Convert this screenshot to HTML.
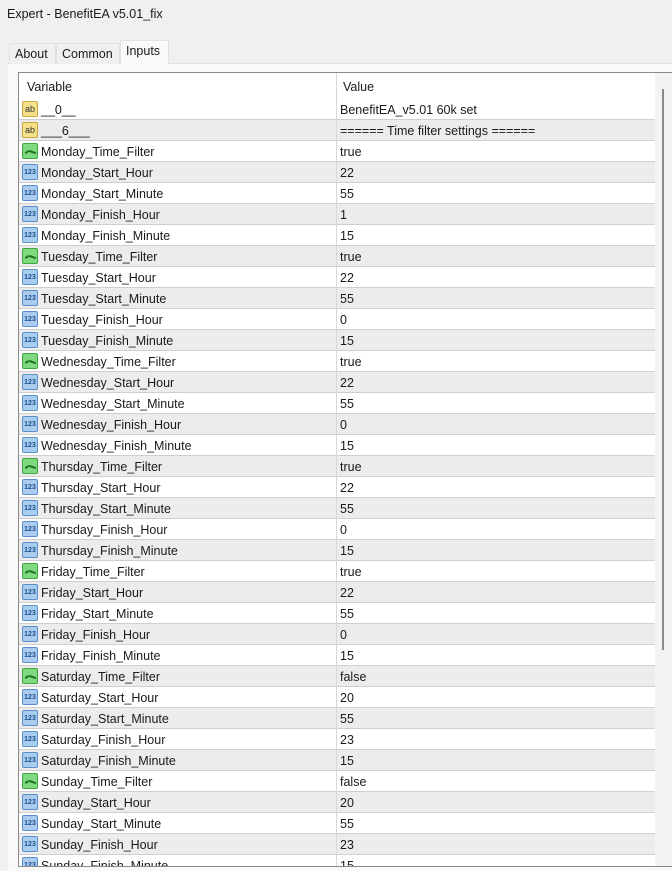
<!DOCTYPE html>
<html><head><meta charset="utf-8"><style>
*{margin:0;padding:0;box-sizing:border-box}
body{width:672px;height:871px;overflow:hidden;background:#f0f0f0;font-family:"Liberation Sans",sans-serif;font-size:12.5px;color:#1a1a1a;position:relative}
.title{position:absolute;left:7px;top:7px;font-size:12.5px}
.tab{position:absolute;top:43px;height:21px;border:1px solid #e2e2e2;border-bottom:none;background:#f0f0f0;padding:3px 0 0 5px}
.panel{position:absolute;left:8px;top:63px;width:664px;height:808px;background:#f9f9f9;border-top:1px solid #e0e0e0}
.tbl{position:absolute;left:18px;top:72px;width:654px;height:795px;border:1px solid #8a8a8a;border-right:none;background:#fff;overflow:hidden}
.hdr{position:absolute;left:0;top:0;width:636px;height:25px;background:#fff}
.hdr span{position:absolute;top:7px}
.vline{position:absolute;left:317px;top:0;width:1px;height:800px;background:#d8d8d8}
.row{position:absolute;left:0;width:636px;height:21px;border-bottom:1px solid #cfcfcf}
.row.g{background:#ececec}
.row .n{position:absolute;left:22px;top:4px}
.row .v{position:absolute;left:321px;top:4px}
.ic{position:absolute;left:3px;top:2px;width:16px;height:16px;border-radius:2px;font-size:8px;text-align:center;line-height:15px;font-style:normal;display:block}
.ab{background:#f4e08a;border:1px solid #c9a93e;color:#333;font-size:9px}
.gr{background:#7fd97f;border:1px solid #3fa63f}
.bl{background:#a9ccef;border:1px solid #5b8fc8;color:#1b4f8e;font-weight:bold;font-size:7px}
.sb{position:absolute;left:636px;top:0;width:18px;height:800px;background:#f3f3f3}
.th{position:absolute;left:7px;top:16px;width:2px;height:561px;background:#8a8a8a}
i.gr::before{content:"";position:absolute;left:2px;top:7px;width:4px;height:2px;background:#1f6e1f;transform:rotate(-35deg)}
i.gr::after{content:"";position:absolute;left:6px;top:7px;width:7px;height:2px;background:#1f6e1f;transform:rotate(20deg)}
</style></head><body>
<div class="title">Expert - BenefitEA v5.01_fix</div>
<div class="panel"></div>
<div class="tab" style="left:9px;width:47px">About</div>
<div class="tab" style="left:56px;width:64px">Common</div>
<div class="tab" style="left:120px;top:40px;height:24px;width:49px;background:#f9f9f9;padding-top:3px">Inputs</div>
<div class="tbl">
<div class="hdr"><span style="left:8px">Variable</span><span style="left:324px">Value</span></div>
<div style="position:absolute;top:26px;left:0;width:654px;height:800px">
<div class="row" style="top:0"><i class="ic ab">ab</i><span class="n">__0__</span><span class="v">BenefitEA_v5.01 60k set</span></div>
<div class="row g" style="top:21px"><i class="ic ab">ab</i><span class="n">___6___</span><span class="v">====== Time filter settings ======</span></div>
<div class="row" style="top:42px"><i class="ic gr"></i><span class="n">Monday_Time_Filter</span><span class="v">true</span></div>
<div class="row g" style="top:63px"><i class="ic bl">123</i><span class="n">Monday_Start_Hour</span><span class="v">22</span></div>
<div class="row" style="top:84px"><i class="ic bl">123</i><span class="n">Monday_Start_Minute</span><span class="v">55</span></div>
<div class="row g" style="top:105px"><i class="ic bl">123</i><span class="n">Monday_Finish_Hour</span><span class="v">1</span></div>
<div class="row" style="top:126px"><i class="ic bl">123</i><span class="n">Monday_Finish_Minute</span><span class="v">15</span></div>
<div class="row g" style="top:147px"><i class="ic gr"></i><span class="n">Tuesday_Time_Filter</span><span class="v">true</span></div>
<div class="row" style="top:168px"><i class="ic bl">123</i><span class="n">Tuesday_Start_Hour</span><span class="v">22</span></div>
<div class="row g" style="top:189px"><i class="ic bl">123</i><span class="n">Tuesday_Start_Minute</span><span class="v">55</span></div>
<div class="row" style="top:210px"><i class="ic bl">123</i><span class="n">Tuesday_Finish_Hour</span><span class="v">0</span></div>
<div class="row g" style="top:231px"><i class="ic bl">123</i><span class="n">Tuesday_Finish_Minute</span><span class="v">15</span></div>
<div class="row" style="top:252px"><i class="ic gr"></i><span class="n">Wednesday_Time_Filter</span><span class="v">true</span></div>
<div class="row g" style="top:273px"><i class="ic bl">123</i><span class="n">Wednesday_Start_Hour</span><span class="v">22</span></div>
<div class="row" style="top:294px"><i class="ic bl">123</i><span class="n">Wednesday_Start_Minute</span><span class="v">55</span></div>
<div class="row g" style="top:315px"><i class="ic bl">123</i><span class="n">Wednesday_Finish_Hour</span><span class="v">0</span></div>
<div class="row" style="top:336px"><i class="ic bl">123</i><span class="n">Wednesday_Finish_Minute</span><span class="v">15</span></div>
<div class="row g" style="top:357px"><i class="ic gr"></i><span class="n">Thursday_Time_Filter</span><span class="v">true</span></div>
<div class="row" style="top:378px"><i class="ic bl">123</i><span class="n">Thursday_Start_Hour</span><span class="v">22</span></div>
<div class="row g" style="top:399px"><i class="ic bl">123</i><span class="n">Thursday_Start_Minute</span><span class="v">55</span></div>
<div class="row" style="top:420px"><i class="ic bl">123</i><span class="n">Thursday_Finish_Hour</span><span class="v">0</span></div>
<div class="row g" style="top:441px"><i class="ic bl">123</i><span class="n">Thursday_Finish_Minute</span><span class="v">15</span></div>
<div class="row" style="top:462px"><i class="ic gr"></i><span class="n">Friday_Time_Filter</span><span class="v">true</span></div>
<div class="row g" style="top:483px"><i class="ic bl">123</i><span class="n">Friday_Start_Hour</span><span class="v">22</span></div>
<div class="row" style="top:504px"><i class="ic bl">123</i><span class="n">Friday_Start_Minute</span><span class="v">55</span></div>
<div class="row g" style="top:525px"><i class="ic bl">123</i><span class="n">Friday_Finish_Hour</span><span class="v">0</span></div>
<div class="row" style="top:546px"><i class="ic bl">123</i><span class="n">Friday_Finish_Minute</span><span class="v">15</span></div>
<div class="row g" style="top:567px"><i class="ic gr"></i><span class="n">Saturday_Time_Filter</span><span class="v">false</span></div>
<div class="row" style="top:588px"><i class="ic bl">123</i><span class="n">Saturday_Start_Hour</span><span class="v">20</span></div>
<div class="row g" style="top:609px"><i class="ic bl">123</i><span class="n">Saturday_Start_Minute</span><span class="v">55</span></div>
<div class="row" style="top:630px"><i class="ic bl">123</i><span class="n">Saturday_Finish_Hour</span><span class="v">23</span></div>
<div class="row g" style="top:651px"><i class="ic bl">123</i><span class="n">Saturday_Finish_Minute</span><span class="v">15</span></div>
<div class="row" style="top:672px"><i class="ic gr"></i><span class="n">Sunday_Time_Filter</span><span class="v">false</span></div>
<div class="row g" style="top:693px"><i class="ic bl">123</i><span class="n">Sunday_Start_Hour</span><span class="v">20</span></div>
<div class="row" style="top:714px"><i class="ic bl">123</i><span class="n">Sunday_Start_Minute</span><span class="v">55</span></div>
<div class="row g" style="top:735px"><i class="ic bl">123</i><span class="n">Sunday_Finish_Hour</span><span class="v">23</span></div>
<div class="row" style="top:756px"><i class="ic bl">123</i><span class="n">Sunday_Finish_Minute</span><span class="v">15</span></div>
</div>
<div class="vline"></div>
<div class="sb"><div class="th"></div></div>
</div>
</body></html>
